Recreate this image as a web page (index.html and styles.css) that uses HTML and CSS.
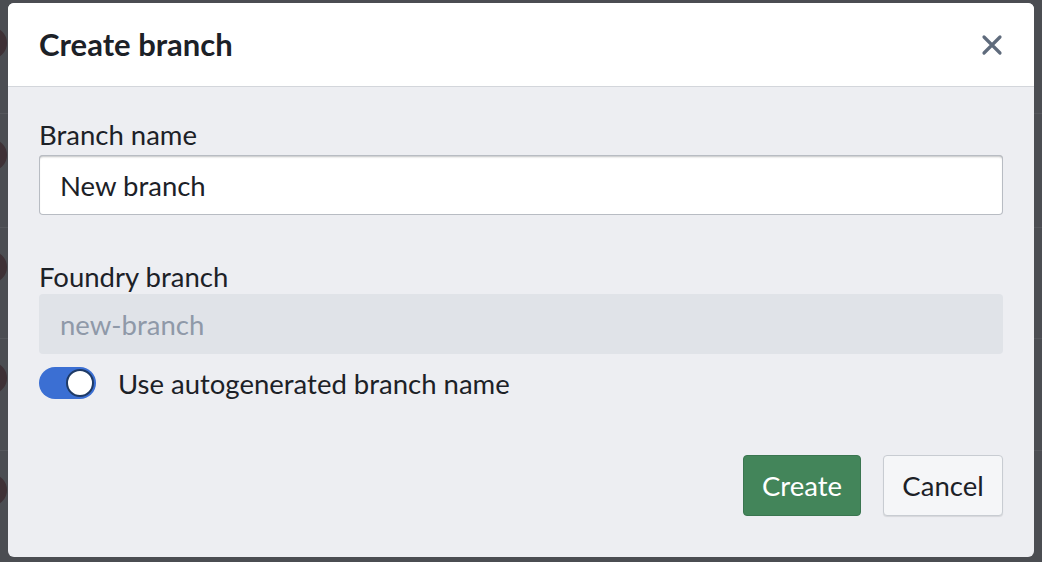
FILE: index.html
```html
<!DOCTYPE html>
<html>
<head>
<meta charset="utf-8">
<link rel="stylesheet" href="styles.css">
</head>
<body>
<div class="backdrop">
  <div class="row-line" style="top:113px"></div>
  <div class="row-line" style="top:227px"></div>
  <div class="row-line" style="top:338px"></div>
  <div class="row-line" style="top:450px"></div>
  <div class="avatar" style="top:27px"></div>
  <div class="avatar" style="top:139px"></div>
  <div class="avatar" style="top:251px"></div>
  <div class="avatar" style="top:362px"></div>
  <div class="avatar" style="top:474px"></div>
</div>
<div class="dialog">
  <div class="header">
    <h1 class="title">Create branch</h1>
    <svg class="close" width="22" height="22" viewBox="0 0 22 22">
      <path d="M3 3 L19 19 M19 3 L3 19" stroke="#5f6b7c" stroke-width="3.2" stroke-linecap="round"/>
    </svg>
  </div>
  <div class="body">
    <label class="label first">Branch name</label>
    <div class="input">New branch</div>
    <label class="label second">Foundry branch</label>
    <div class="input disabled">new-branch</div>
    <div class="switch-row">
      <span class="switch"><span class="knob"></span></span>
      <span class="switch-label">Use autogenerated branch name</span>
    </div>
    <div class="footer">
      <button class="btn primary">Create</button>
      <button class="btn default">Cancel</button>
    </div>
  </div>
</div>
</body>
</html>
```

FILE: styles.css
```css
html, body {
  margin: 0;
  padding: 0;
  width: 1042px;
  height: 562px;
  overflow: hidden;
  background: #4b4d52;
  font-family: Lato, "Open Sans", sans-serif;
  color: #1c2127;
}

.backdrop {
  position: absolute;
  inset: 0;
  overflow: hidden;
}

.row-line {
  position: absolute;
  left: 0;
  right: 0;
  height: 1px;
  background: #55575c;
}

.avatar {
  position: absolute;
  left: -25px;
  width: 32px;
  height: 32px;
  border-radius: 50%;
  background: #3e3136;
}

.dialog {
  position: relative;
  margin: 3px 8px 0 8px;
  width: 1026px;
  height: 554px;
  border-radius: 6px;
  background: #edeef2;
  overflow: hidden;
  display: flex;
  flex-direction: column;
}

.header {
  height: 83px;
  background: #ffffff;
  border-bottom: 1px solid #d3d6db;
  padding: 0 31px;
  display: flex;
  align-items: center;
  justify-content: space-between;
  flex-shrink: 0;
}

.title {
  margin: 0 0 2px 0;
  font-size: 31px;
  font-weight: 700;
  color: #1c2127;
}

.close {
  display: block;
}

.body {
  flex: 1;
  padding: 0 31px;
  display: flex;
  flex-direction: column;
}

.label {
  display: block;
  font-size: 27.5px;
  line-height: 30px;
  color: #1c2127;
}

.label.first {
  margin-top: 33px;
  margin-bottom: 5px;
}

.label.second {
  margin-top: 47px;
  margin-bottom: 2px;
}

.input {
  box-sizing: border-box;
  height: 60px;
  background: #ffffff;
  border-radius: 4px;
  box-shadow: inset 0 0 0 1px #b8bcc3, inset 0 2px 2px rgba(17, 20, 24, 0.25);
  padding: 0 21px;
  display: flex;
  align-items: center;
  font-size: 27.5px;
  color: #1c2127;
}

.input.disabled {
  background: #e0e3e8;
  box-shadow: none;
  color: #8f99a8;
}

.switch-row {
  margin-top: 13px;
  display: flex;
  align-items: center;
  gap: 22px;
  height: 32px;
}

.switch {
  position: relative;
  width: 57px;
  height: 32px;
  border-radius: 16px;
  background: #3b6fd3;
  flex-shrink: 0;
}

.knob {
  position: absolute;
  right: 2px;
  top: 2px;
  width: 24px;
  height: 24px;
  border-radius: 50%;
  background: #ffffff;
  border: 2px solid #1e3a66;
}

.switch-label {
  font-size: 27.5px;
  color: #1c2127;
}

.footer {
  margin-top: auto;
  margin-bottom: 41px;
  display: flex;
  justify-content: flex-end;
  gap: 22px;
}

.btn {
  height: 61px;
  border-radius: 4px;
  font-family: inherit;
  font-size: 27.5px;
  padding: 0;
  cursor: pointer;
}

.btn.primary {
  width: 118px;
  background: #43855a;
  color: #ffffff;
  border: 1px solid #3a7550;
}

.btn.default {
  width: 120px;
  background: #f5f6f8;
  color: #1c2127;
  border: 1px solid #c8ccd2;
  box-shadow: 0 1px 1px rgba(17, 20, 24, 0.1);
}
```
